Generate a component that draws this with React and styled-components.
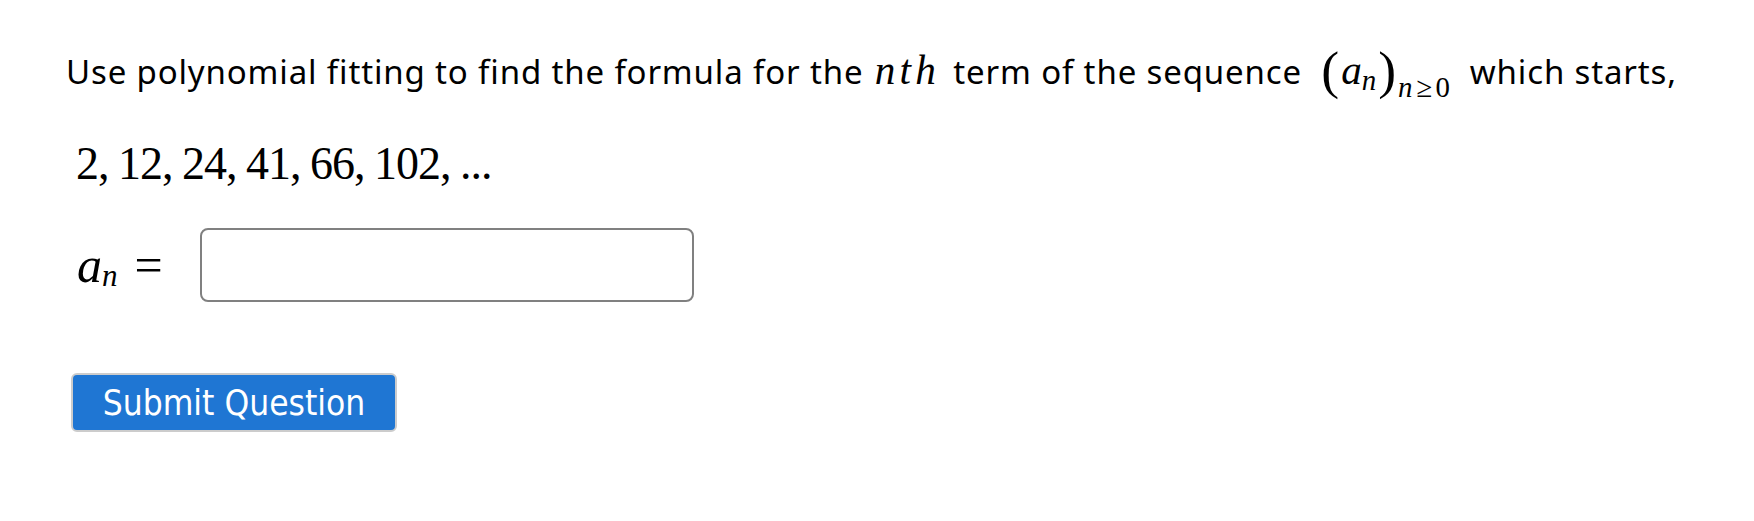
import styled, { createGlobalStyle } from "styled-components"

const GlobalStyle = createGlobalStyle`
    html, body {
        margin: 0;
        padding: 0;
        background: #ffffff;
    }
`

const Page = styled.div`
    width: 1754px;
    height: 521px;
    box-sizing: border-box;
    padding: 42px 0 0 66px;
    font-family: "Noto Sans", "DejaVu Sans", sans-serif;
    color: #000;
    display: flex;
    flex-direction: column;
    align-items: flex-start;
`

const Prompt = styled.p`
    margin: 0;
    font-size: 33px;
    letter-spacing: 0.85px;
    line-height: 56px;
    white-space: nowrap;
`

const Math = styled.span`
    font-family: "Liberation Serif", serif;
    font-size: 1.25em;
    font-style: italic;
    letter-spacing: ${props => props.spread || "0"};
    white-space: nowrap;
    margin: ${props => props.gap || "0"};
`

const Paren = styled.span`
    font-style: normal;
    font-size: 1.3em;
    letter-spacing: 0;
    vertical-align: -0.08em;
    margin: 0 2px;
`

const Sub = styled.sub`
    font-size: ${props => props.scale || "0.7em"};
    vertical-align: ${props => props.drop || "-0.22em"};
    letter-spacing: 0;
    line-height: 0;
`

const Relation = styled.span`
    font-style: normal;
    margin: 0 3px 0 4px;
`

const Upright = styled.span`
    font-style: normal;
`

const Sequence = styled.div`
    margin: 36px 0 0 10px;
    font-family: "Liberation Serif", serif;
    font-size: 46px;
    line-height: 56px;
    letter-spacing: -1px;
    word-spacing: -1px;
`

const AnswerRow = styled.div`
    margin-top: 36px;
    display: flex;
    align-items: center;
    padding-left: 11px;
`

const Variable = styled.span`
    font-family: "Liberation Serif", serif;
    font-style: italic;
    font-size: 50px;
    line-height: 1;
`

const Equals = styled.span`
    font-family: "Liberation Serif", serif;
    font-size: 50px;
    line-height: 1;
    margin: 0 37px 0 17px;
`

const AnswerInput = styled.input`
    width: 494px;
    height: 74px;
    box-sizing: border-box;
    border: 2px solid #808080;
    border-radius: 8px;
    background: #fff;
    font-size: 30px;
    padding: 0 12px;
    outline: none;
`

const SubmitButton = styled.button`
    margin: 71px 0 0 5px;
    width: 326px;
    height: 59px;
    box-sizing: border-box;
    background-color: #1f76d3;
    color: #fff;
    border: 2px solid #cccccc;
    border-radius: 6px;
    font-family: "DejaVu Sans Condensed", "DejaVu Sans", sans-serif;
    font-size: 35px;
    padding: 0;
    cursor: pointer;
`

const App = () => {
    return (
        <>
            <GlobalStyle />
            <Page>
                <Prompt>
                    Use polynomial fitting to find the formula for the <Math spread="0.1em" gap="0 4px 0 2px">nth</Math> term of the sequence{" "}
                    <Math gap="0 20px 0 8px">
                        <Paren>(</Paren>a<Sub>n</Sub><Paren>)</Paren>
                        <Sub drop="-0.45em">n<Relation>≥</Relation><Upright>0</Upright></Sub>
                    </Math>
                    which starts,
                </Prompt>
                <Sequence>2, 12, 24, 41, 66, 102, ...</Sequence>
                <AnswerRow>
                    <Variable>a<Sub scale="0.62em" drop="-0.14em">n</Sub></Variable>
                    <Equals>=</Equals>
                    <AnswerInput type="text" aria-label="a_n" />
                </AnswerRow>
                <SubmitButton type="button">Submit Question</SubmitButton>
            </Page>
        </>
    )
}

export default App
